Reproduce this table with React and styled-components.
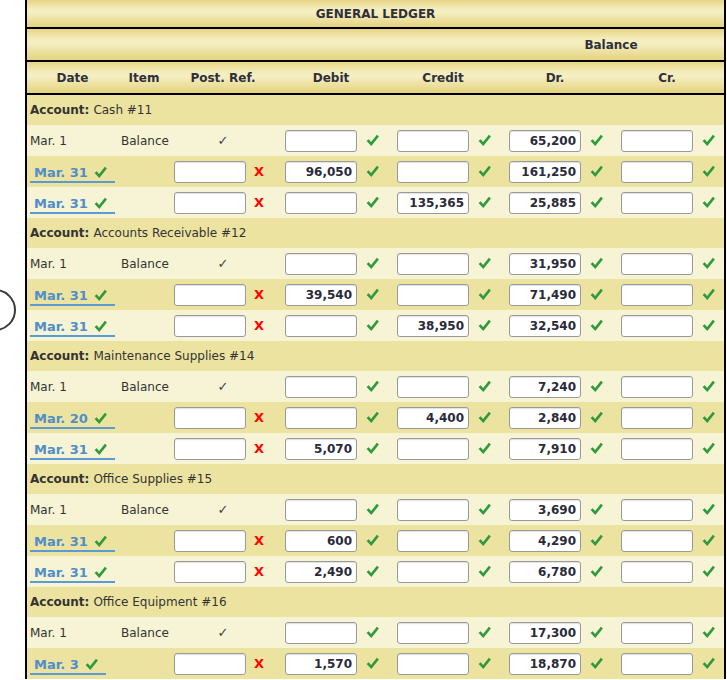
import React from "react";
import styled, { createGlobalStyle } from "styled-components";

const GlobalStyle = createGlobalStyle`
  html, body {
    margin: 0;
    padding: 0;
    background: #ffffff;
    overflow: hidden;
  }
  body {
    font-family: "DejaVu Sans", Verdana, sans-serif;
    font-size: 12px;
    color: #333333;
  }
`;

const COLS = "91px 52px 112px 112px 112px 112px 106px";

const ledger = [
  {
    name: "Cash #11",
    rows: [
      { date: "Mar. 1", balance: true, amounts: ["", "", "65,200", ""] },
      { date: "Mar. 31", amounts: ["96,050", "", "161,250", ""] },
      { date: "Mar. 31", amounts: ["", "135,365", "25,885", ""] },
    ],
  },
  {
    name: "Accounts Receivable #12",
    rows: [
      { date: "Mar. 1", balance: true, amounts: ["", "", "31,950", ""] },
      { date: "Mar. 31", amounts: ["39,540", "", "71,490", ""] },
      { date: "Mar. 31", amounts: ["", "38,950", "32,540", ""] },
    ],
  },
  {
    name: "Maintenance Supplies #14",
    rows: [
      { date: "Mar. 1", balance: true, amounts: ["", "", "7,240", ""] },
      { date: "Mar. 20", amounts: ["", "4,400", "2,840", ""] },
      { date: "Mar. 31", amounts: ["5,070", "", "7,910", ""] },
    ],
  },
  {
    name: "Office Supplies #15",
    rows: [
      { date: "Mar. 1", balance: true, amounts: ["", "", "3,690", ""] },
      { date: "Mar. 31", amounts: ["600", "", "4,290", ""] },
      { date: "Mar. 31", amounts: ["2,490", "", "6,780", ""] },
    ],
  },
  {
    name: "Office Equipment #16",
    rows: [
      { date: "Mar. 1", balance: true, amounts: ["", "", "17,300", ""] },
      { date: "Mar. 3", amounts: ["1,570", "", "18,870", ""] },
    ],
  },
];

const CheckIcon = ({ gap }) => (
  <CheckMark $gap={gap} width="13" height="13" viewBox="0 0 13 13">
    <path d="M0.6 7.1 L2.7 5.3 L5.1 8.1 L10.9 0.8 L12.9 2.6 L5.3 12 Z" />
  </CheckMark>
);

const App = () => {
  return (
    <>
      <GlobalStyle />
      <Page>
        <RoundButton />
        <Ledger>
          <HeaderRow $height={27}>
            <HeaderLabel $span="1 / -1">GENERAL LEDGER</HeaderLabel>
          </HeaderRow>
          <HeaderRow $height={31}>
            <HeaderLabel $span="6 / -1" $shift={8}>
              Balance
            </HeaderLabel>
          </HeaderRow>
          <HeaderRow $height={31}>
            <HeaderLabel>Date</HeaderLabel>
            <HeaderLabel>Item</HeaderLabel>
            <HeaderLabel $shift={6}>Post. Ref.</HeaderLabel>
            <HeaderLabel $shift={14}>Debit</HeaderLabel>
            <HeaderLabel $shift={14}>Credit</HeaderLabel>
            <HeaderLabel $shift={14}>Dr.</HeaderLabel>
            <HeaderLabel $shift={8}>Cr.</HeaderLabel>
          </HeaderRow>

          {ledger.map((account) => (
            <React.Fragment key={account.name}>
              <AccountRow>
                <b>Account:</b> {account.name}
              </AccountRow>
              {account.rows.map((row, i) => (
                <DataRow key={i} $dark={i % 2 === 1}>
                  {row.balance ? (
                    <>
                      <Cell>{row.date}</Cell>
                      <Cell>Balance</Cell>
                      <RefCell>
                        <ThinCheck>✓</ThinCheck>
                      </RefCell>
                    </>
                  ) : (
                    <>
                      <Cell>
                        <DateLink>
                          {row.date}
                          <CheckIcon gap={6} />
                        </DateLink>
                      </Cell>
                      <Cell />
                      <AmountCell $offset={4}>
                        <Field value="" />
                        <Cross>X</Cross>
                      </AmountCell>
                    </>
                  )}
                  {row.amounts.map((value, j) => (
                    <AmountCell key={j}>
                      <Field value={value} />
                      <CheckIcon gap={9} />
                    </AmountCell>
                  ))}
                </DataRow>
              ))}
            </React.Fragment>
          ))}
        </Ledger>
      </Page>
    </>
  );
};

const Field = ({ value }) => <Input readOnly value={value} />;

const Page = styled.div`
  position: relative;
  width: 727px;
  height: 680px;
  overflow: hidden;
  padding-left: 25px;
  box-sizing: border-box;
`;

const RoundButton = styled.div`
  position: absolute;
  left: -26px;
  top: 289px;
  width: 38px;
  height: 38px;
  border: 2px solid #3a3a3a;
  border-radius: 50%;
`;

const Ledger = styled.div`
  width: 701px;
  box-sizing: border-box;
  border-left: 2px solid #000;
  border-right: 2px solid #000;
  display: flex;
  flex-direction: column;
`;

const HeaderRow = styled.div`
  display: grid;
  grid-template-columns: ${COLS};
  align-items: center;
  height: ${(p) => p.$height}px;
  border-bottom: 2px solid #000;
  background: linear-gradient(
    to bottom,
    #e7d585 0%,
    #f3ebb8 30%,
    #f5efc4 45%,
    #ece09e 75%,
    #e4d27d 100%
  );
`;

const HeaderLabel = styled.div`
  grid-column: ${(p) => p.$span || "auto"};
  text-align: center;
  font-weight: bold;
  color: #2f2f3a;
  padding-right: ${(p) => p.$shift || 0}px;
`;

const AccountRow = styled.div`
  height: 30px;
  display: flex;
  align-items: center;
  padding-left: 3px;
  background: #ede3a0;
  color: #333;

  b {
    margin-right: 4px;
  }
`;

const DataRow = styled.div`
  display: grid;
  grid-template-columns: ${COLS};
  align-items: center;
  height: 31px;
  background: ${(p) => (p.$dark ? "#ede3a0" : "#f6f4d4")};
`;

const Cell = styled.div`
  padding-left: 3px;
  white-space: nowrap;
`;

const RefCell = styled.div`
  display: flex;
  justify-content: center;
  padding-right: 6px;
`;

const ThinCheck = styled.span`
  color: #444;
  font-size: 13px;
`;

const DateLink = styled.span`
  display: inline-flex;
  align-items: center;
  margin-top: 4px;
  padding: 0 8px 1px 4px;
  border-bottom: 2px solid #5b9bd5;
  color: #4f8ec9;
  font-weight: bold;
  font-size: 13px;
`;

const AmountCell = styled.div`
  display: flex;
  align-items: center;
  padding-left: ${(p) => p.$offset || 3}px;
`;

const Input = styled.input`
  width: 72px;
  height: 22px;
  box-sizing: border-box;
  border: 1px solid #9a9a9a;
  border-radius: 3px;
  background: #fff;
  box-shadow: inset 0 1px 1px rgba(0, 0, 0, 0.12);
  padding: 0 4px;
  text-align: right;
  font-family: "DejaVu Sans", Verdana, sans-serif;
  font-size: 12px;
  font-weight: bold;
  color: #2a2a3a;
  outline: none;
`;

const CheckMark = styled.svg`
  flex: none;
  margin-left: ${(p) => p.$gap}px;
  fill: #2f9a3c;
`;

const Cross = styled.span`
  color: #f00;
  font-weight: bold;
  font-size: 13px;
  margin-left: 8px;
`;

export default App;
